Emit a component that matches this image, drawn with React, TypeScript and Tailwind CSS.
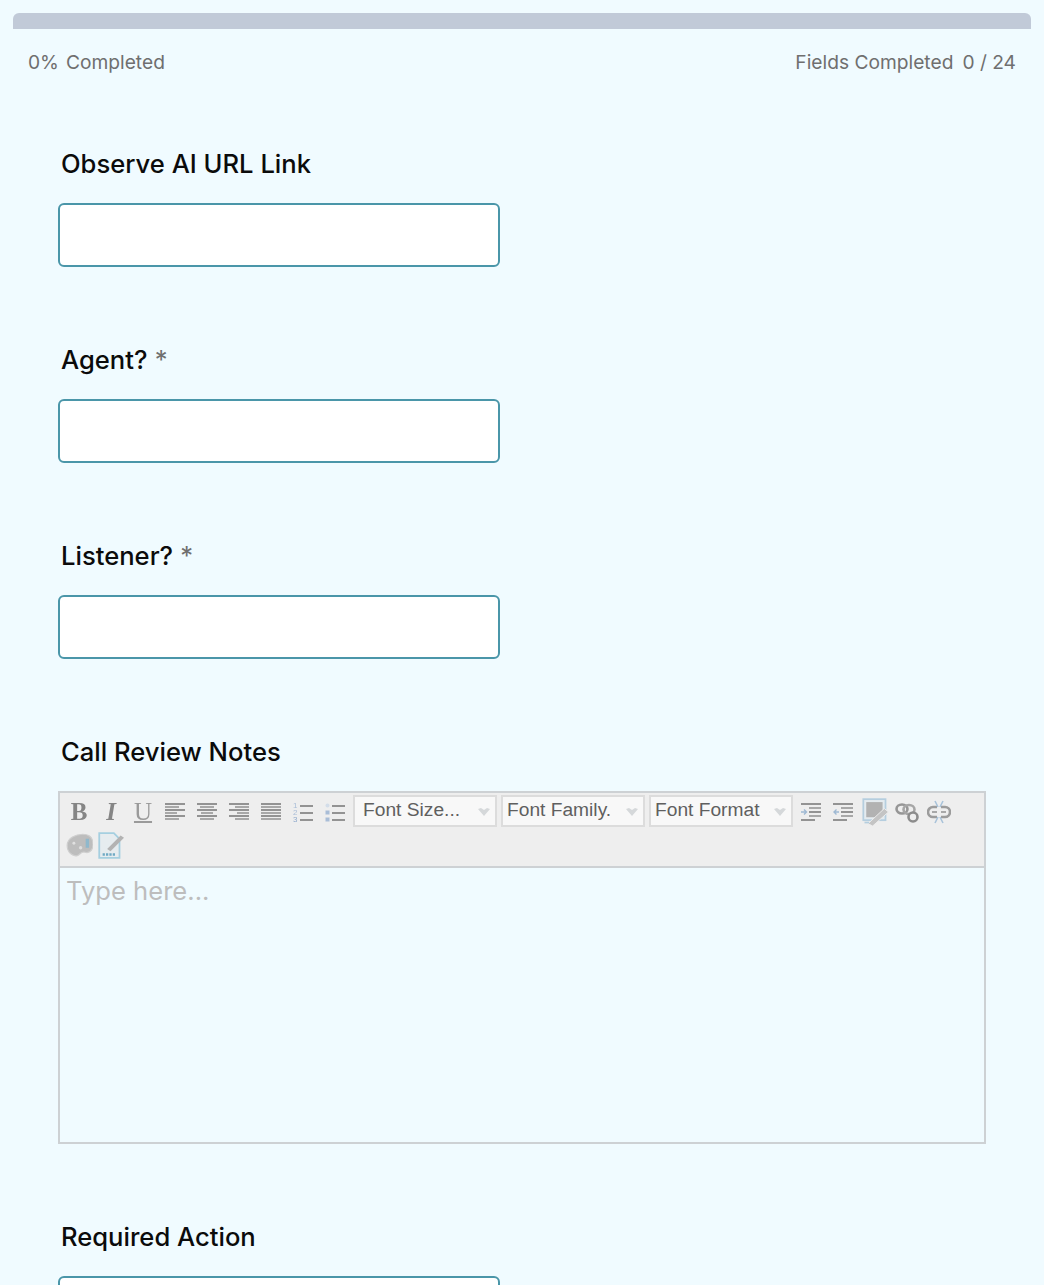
import React from 'react';

const INK = '#939393';

function Lines({ rows }: { rows: [number, number][] }) {
  return (
    <>
      {rows.map(([x, w], i) => (
        <rect key={i} x={x} y={3 + i * 3} width={w} height={2} fill={i % 2 ? '#a8a8a8' : INK} />
      ))}
    </>
  );
}

const align: Record<string, [number, number][]> = {
  left: [[2, 20], [2, 14], [2, 20], [2, 12], [2, 20], [2, 14]],
  center: [[2, 20], [5, 14], [2, 20], [6, 12], [2, 20], [5, 14]],
  right: [[2, 20], [8, 14], [2, 20], [10, 12], [2, 20], [8, 14]],
  full: [[2, 20], [2, 20], [2, 20], [2, 20], [2, 20], [2, 20]],
};

function IconSlot({ children, narrow }: { children: React.ReactNode; narrow?: boolean }) {
  return <div className={`${narrow ? 'w-[31px]' : 'w-[32px]'} h-[33px] flex items-center justify-center`}>{children}</div>;
}

function Svg({ children, size = 24 }: { children: React.ReactNode; size?: number }) {
  return (
    <svg width={size} height={size} viewBox="0 0 24 24" className="shrink-0 blur-[0.7px]">
      {children}
    </svg>
  );
}

function GlyphButton({ children, className }: { children: React.ReactNode; className: string }) {
  return (
    <IconSlot>
      <span className={`font-['Liberation_Serif',serif] text-[25px] leading-none text-[#858585] blur-[0.7px] ${className}`}>{children}</span>
    </IconSlot>
  );
}

function FontSelect({ label, inset }: { label: string; inset: string }) {
  return (
    <div className={`w-[144px] h-[32px] mr-[4px] ${inset} flex items-center justify-between bg-[#f8f8f8] border-2 border-[#dcdcdc] text-[19.2px] text-[#5f5f5f] font-['Liberation_Sans',sans-serif]`}>
      <span className="-mt-[2px]">{label}</span>
      <svg width="14" height="10" viewBox="0 0 14 10" className="mr-[4px] mt-[2px] blur-[0.4px]">
        <path d="M1 2 L4 1 L7 3 L10 1 L13 2 L7 9 Z" fill="#d5d8da" />
      </svg>
    </div>
  );
}

function Label({ children }: { children: React.ReactNode }) {
  return <div className="pl-[3px] h-[32px] text-[25.6px] leading-[32px] font-medium text-[#0b0b0b]">{children}</div>;
}

function Field({ label, required, className }: { label: string; required?: boolean; className: string }) {
  return (
    <div className={className}>
      <Label>
        {label}
        {required && <span className="text-[#6f6f6f] font-normal"> *</span>}
      </Label>
      <div className="mt-[23px] w-[442px] h-[64px] bg-white rounded-[6px] border-2 border-[#4a96a9]" />
    </div>
  );
}

export default function App() {
  return (
    <div className="h-[1285px] overflow-hidden bg-[#f0fbff] font-['Inter',sans-serif]">
      <div className="pt-[13px] px-[13px]">
        <div className="h-[16px] rounded-t-[6px] bg-[#c1cad8]" />
        <div className="mt-[20px] pl-[15px] pr-[15px] flex justify-between text-[19.2px] leading-[26px] text-[#6f6f6f]">
          <div className="flex gap-[7px]">
            <span>0%</span>
            <span>Completed</span>
          </div>
          <div className="flex gap-[9px]">
            <span>Fields Completed</span>
            <span>0 / 24</span>
          </div>
        </div>
      </div>

      <div className="pl-[58px] pr-[58px]">
        <Field label="Observe AI URL Link" className="mt-[73px]" />
        <Field label="Agent?" required className="mt-[77px]" />
        <Field label="Listener?" required className="mt-[77px]" />

        <div className="mt-[77px]">
          <Label>Call Review Notes</Label>
          <div className="mt-[23px] w-[928px] h-[353px] border-2 border-[#cdd1d4]">
            <div className="h-[75px] pl-[3px] pt-[2px] flex flex-wrap content-start gap-y-[1px] bg-[#eeeeee] border-b-2 border-[#cdd1d4]">
              <GlyphButton className="font-bold">B</GlyphButton>
              <GlyphButton className="font-bold italic">I</GlyphButton>
              <IconSlot>
                <span className="font-['Liberation_Serif',serif] text-[25px] leading-none text-[#9a9a9a] underline decoration-2 blur-[0.7px]">U</span>
              </IconSlot>
              <IconSlot><Svg><Lines rows={align.left} /></Svg></IconSlot>
              <IconSlot><Svg><Lines rows={align.center} /></Svg></IconSlot>
              <IconSlot><Svg><Lines rows={align.right} /></Svg></IconSlot>
              <IconSlot><Svg><Lines rows={align.full} /></Svg></IconSlot>
              <IconSlot>
                <Svg>
                  <text x="2" y="8" fontSize="8" fill="#a9bdd7" fontFamily="Liberation Sans">1</text>
                  <text x="2" y="15" fontSize="8" fill="#a9bdd7" fontFamily="Liberation Sans">2</text>
                  <text x="2" y="22" fontSize="8" fill="#8fa9cc" fontFamily="Liberation Sans">3</text>
                  <rect x="9" y="5" width="13" height="2" fill={INK} />
                  <rect x="9" y="12" width="13" height="2" fill={INK} />
                  <rect x="9" y="19" width="13" height="2" fill={INK} />
                </Svg>
              </IconSlot>
              <IconSlot>
                <Svg>
                  <circle cx="4.5" cy="5.5" r="2" fill="#d3dde9" />
                  <rect x="2.5" y="10.5" width="4" height="4" fill="#a9bdd7" />
                  <rect x="2.5" y="17.5" width="4" height="4" fill="#a9bdd7" />
                  <rect x="9" y="5" width="13" height="2" fill={INK} />
                  <rect x="9" y="12" width="13" height="2" fill={INK} />
                  <rect x="9" y="19" width="13" height="2" fill={INK} />
                </Svg>
              </IconSlot>
              <div className="ml-[2px] flex">
                <FontSelect label="Font Size..." inset="pl-[8px]" />
                <FontSelect label="Font Family." inset="pl-[4px]" />
                <FontSelect label="Font Format" inset="pl-[4px]" />
              </div>
              <div className="-ml-[2px] flex">
                <IconSlot>
                  <Svg>
                    <rect x="2" y="3" width="20" height="2" fill={INK} />
                    <rect x="10" y="7" width="12" height="2" fill="#a8a8a8" />
                    <rect x="10" y="11" width="12" height="2" fill={INK} />
                    <rect x="10" y="15" width="12" height="2" fill="#a8a8a8" />
                    <rect x="2" y="19" width="14" height="2" fill={INK} />
                    <path d="M2 12 H7 M5 9.5 L7.5 12 L5 14.5" stroke="#9fb9d3" strokeWidth="1.4" fill="none" />
                  </Svg>
                </IconSlot>
                <IconSlot>
                  <Svg>
                    <rect x="2" y="3" width="20" height="2" fill={INK} />
                    <rect x="10" y="7" width="12" height="2" fill="#a8a8a8" />
                    <rect x="10" y="11" width="12" height="2" fill={INK} />
                    <rect x="10" y="15" width="12" height="2" fill="#a8a8a8" />
                    <rect x="2" y="19" width="14" height="2" fill={INK} />
                    <path d="M8 12 H3 M5.5 9.5 L3 12 L5.5 14.5" stroke="#9fb9d3" strokeWidth="1.4" fill="none" />
                  </Svg>
                </IconSlot>
                <IconSlot>
                  <Svg size={28}>
                    <rect x="2" y="1" width="19" height="18" fill="#e4ebef" stroke="#b5cedf" strokeWidth="1.5" />
                    <rect x="4.5" y="3.5" width="14" height="13" fill="#b2b2b2" />
                    <path d="M6 22 L20 9 L23.5 12 L10 24 Z" fill="#c4c4c4" stroke="#eeeeee" strokeWidth="0.8" />
                    <path d="M3 21 H7" stroke="#b5cedf" strokeWidth="1.5" />
                  </Svg>
                </IconSlot>
                <IconSlot>
                  <Svg>
                    <ellipse cx="7" cy="9" rx="5.5" ry="4.5" fill="none" stroke="#969696" strokeWidth="2.6" />
                    <ellipse cx="14" cy="9.5" rx="5.5" ry="4.5" fill="none" stroke="#a6a6a6" strokeWidth="2.6" />
                    <circle cx="18" cy="17" r="4.5" fill="#eeeeee" stroke="#8c8c8c" strokeWidth="2.6" />
                  </Svg>
                </IconSlot>
                <IconSlot narrow>
                  <Svg>
                    <path d="M10 7 H6 A5 5 0 0 0 6 17 H10 M14 7 H18 A5 5 0 0 1 18 17 H14" fill="none" stroke="#9c9c9c" strokeWidth="2.6" />
                    <path d="M5 12 H10 M14 12 H19" stroke="#a8a8a8" strokeWidth="1.8" />
                    <path d="M8 1 L11 7 M16 1 L13 7 M8 23 L11 17 M16 23 L13 17" stroke="#a9c3da" strokeWidth="1.6" />
                  </Svg>
                </IconSlot>
              </div>
              <IconSlot>
                <Svg size={27}>
                  <path d="M1 12 C1 5 9 2 15 2 C21 2 24 5 24 11 C24 17 20 19 17 18 C13 17 13 20 10 21 C6 22 1 18 1 12 Z" fill="#bdbdbd" stroke="#cfcfcf" />
                  <rect x="17.5" y="6" width="3" height="8" fill="#8fb8cc" />
                  <circle cx="7" cy="10" r="1.3" fill="#e0e0e0" />
                  <circle cx="13" cy="14" r="1.5" fill="#dedede" />
                </Svg>
              </IconSlot>
              <IconSlot narrow>
                <Svg size={27}>
                  <path d="M2 1 H15 L20 6 V23 H2 Z" fill="#e6ecef" stroke="#a5cfe0" strokeWidth="1.6" />
                  <path d="M9 15 L21 3 L24 5 L12 17 Z" fill="#b3b3b3" />
                  <path d="M5 20 H17" stroke="#6fa9c4" strokeWidth="2.4" strokeDasharray="2 1" />
                </Svg>
              </IconSlot>
            </div>
            <div className="pl-[6px] pt-[8px] text-[25.6px] leading-[30px] text-[#bdbdbd]">Type here...</div>
          </div>
        </div>

        <Field label="Required Action" className="mt-[77px]" />
      </div>
    </div>
  );
}
